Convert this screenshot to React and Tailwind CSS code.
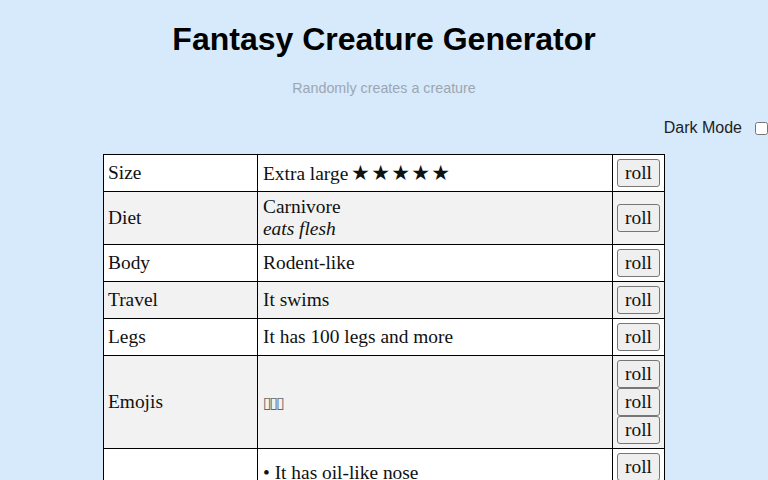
import React from "react";

function Roll() {
  return (
    <button className="block h-[28px] px-[7px] py-0 leading-[22px] text-[19.4px] bg-[#efefef] border border-[#767676] rounded-[3px] text-[#111] [font-family:'Liberation_Serif',serif]">
      roll
    </button>
  );
}

const rows = [
  {
    label: "Size",
    value: (
      <span>
        Extra large{" "}
        <span className="-ml-[2px] [font-family:'DejaVu_Sans',sans-serif] text-[21px] tracking-[1.2px] leading-[22px]">★★★★★</span>
      </span>
    ),
    rolls: 1,
  },
  {
    label: "Diet",
    value: (
      <span>
        Carnivore
        <br />
        <i>eats flesh</i>
      </span>
    ),
    rolls: 1,
  },
  { label: "Body", value: "Rodent-like", rolls: 1 },
  { label: "Travel", value: "It swims", rolls: 1 },
  { label: "Legs", value: "It has 100 legs and more", rolls: 1 },
  {
    label: "Emojis",
    value: <span className="[font-family:'DejaVu_Sans',sans-serif] text-[16px] leading-[22px] tracking-[-2.2px] text-[#666]">▯▯▯</span>,
    rolls: 3,
  },
  {
    label: "Features",
    value: (
      <span>
        • It has oil-like nose
        <br />• It has glowing eyes
        <br />• It has sharp claws
      </span>
    ),
    rolls: 3,
  },
];

export default function App() {
  return (
    <div className="min-h-screen bg-[#d6eafc] text-black">
      <div className="[font-family:'Liberation_Sans',Arial,sans-serif] text-center">
        <h1 className="pt-[21px] text-[32px] leading-[37px] font-bold">Fantasy Creature Generator</h1>
        <p className="mt-[22px] text-[14.3px] leading-[16px] text-[#9ca6b2]">Randomly creates a creature</p>
        <div className="mt-[23px] flex justify-end items-center h-[18px]">
          <span className="text-[16px] leading-[18px] text-[#222]">Dark Mode</span>
          <input type="checkbox" className="ml-[13px] w-[13px] h-[13px]" />
        </div>
      </div>
      <table className="mx-auto mt-[17px] w-[561px] table-fixed border-collapse bg-white [font-family:'Liberation_Serif','Times_New_Roman',serif] text-[19.4px] leading-[22px] text-[#111]">
        <colgroup>
          <col className="w-[154px]" />
          <col className="w-[355px]" />
          <col className="w-[52px]" />
        </colgroup>
        <tbody>
          {rows.map((r, i) => (
            <tr key={r.label} className={i % 2 === 1 ? "bg-[#f2f2f2]" : "bg-white"}>
              <td className="border border-black p-1 align-middle">{r.label}</td>
              <td className="border border-black py-1 pl-[5px] pr-1 align-middle">{r.value}</td>
              <td className="border border-black p-1 align-middle">
                {Array.from({ length: r.rolls }).map((_, k) => (
                  <Roll key={k} />
                ))}
              </td>
            </tr>
          ))}
        </tbody>
      </table>
      <div className="h-[40px]" />
    </div>
  );
}
